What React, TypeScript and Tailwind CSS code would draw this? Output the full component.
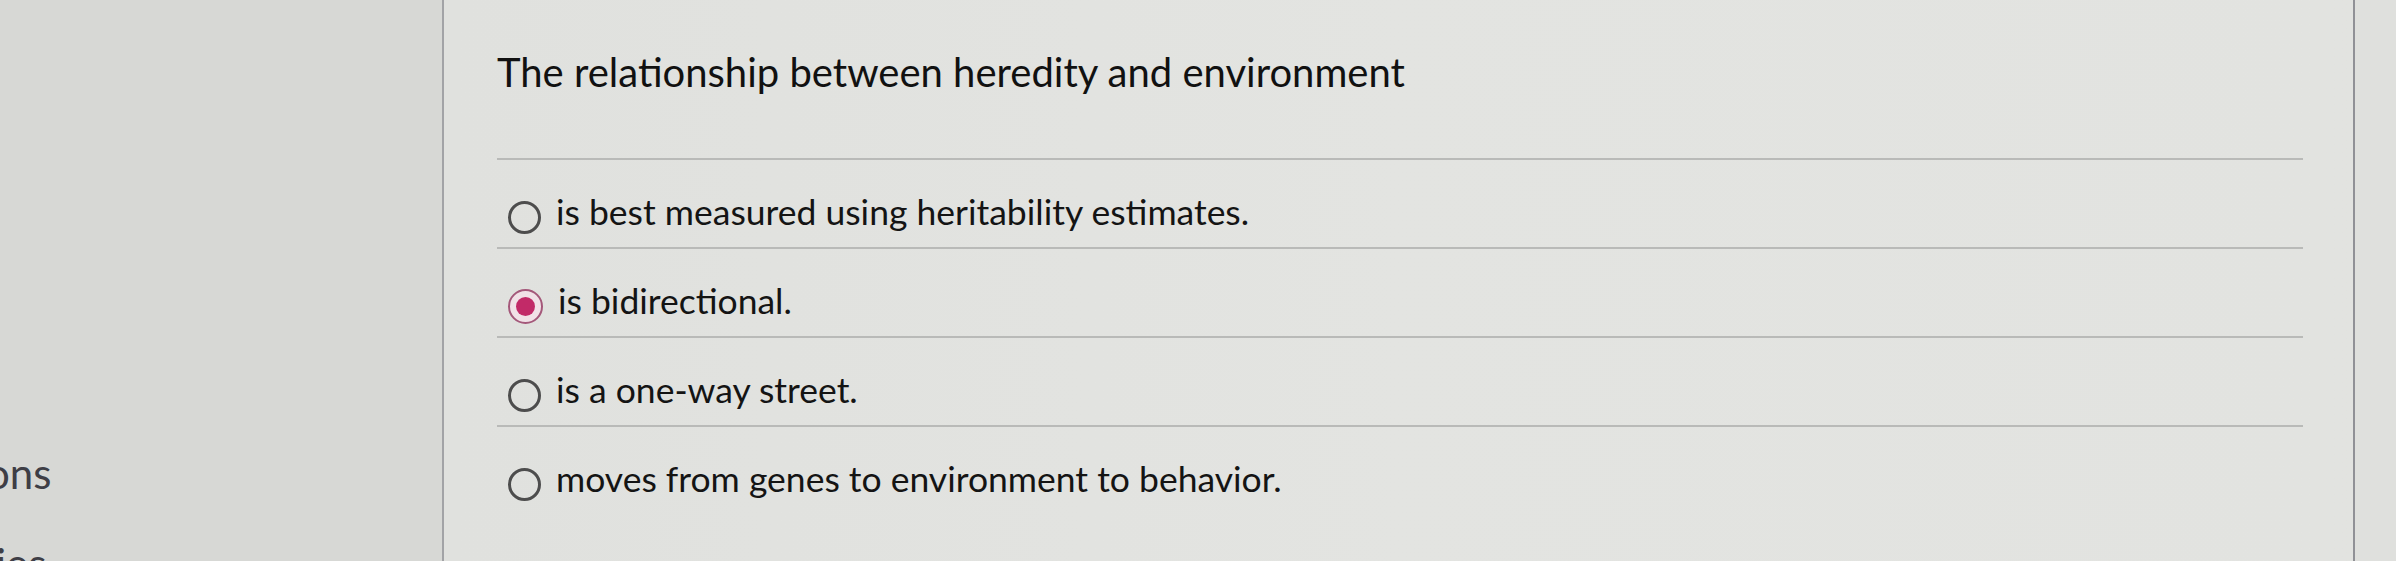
import React from "react";

interface Choice {
  id: string;
  label: string;
  selected?: boolean;
}

const choices: Choice[] = [
  { id: "a", label: "is best measured using heritability estimates." },
  { id: "b", label: "is bidirectional.", selected: true },
  { id: "c", label: "is a one-way street." },
  { id: "d", label: "moves from genes to environment to behavior." },
];

const Radio: React.FC<{ selected?: boolean }> = ({ selected }) => {
  if (selected) {
    return (
      <div className="mt-[9px] ml-[11px] w-[35px] h-[35px] shrink-0 rounded-full border-2 border-[#a4587a] bg-[#f1e1e7] flex items-center justify-center">
        <div className="w-[19px] h-[19px] rounded-full bg-[#c22a68]" />
      </div>
    );
  }
  return (
    <div className="mt-[10px] ml-[11px] w-[33px] h-[33px] shrink-0 rounded-full border-[3px] border-[#4d4d4d]" />
  );
};

export default function App() {
  return (
    <div
      className="w-[2396px] h-[561px] flex overflow-hidden bg-[#dedfdc]"
      style={{ fontFamily: "Lato, 'Noto Sans', sans-serif" }}
    >
      {/* course nav, mostly off screen */}
      <div className="w-[444px] shrink-0 bg-[#d7d8d5] border-r-2 border-[#a2a3a6] flex flex-col pt-[448px] overflow-hidden">
        <div className="-ml-[14px] text-[42px] leading-[1.2] text-[#3e3e46]">ons</div>
        <div className="mt-[40px] -ml-[4px] text-[42px] leading-[1.2] text-[#3e3e46]">ies</div>
      </div>

      {/* question panel */}
      <div className="w-[1911px] shrink-0 bg-gradient-to-r from-[#e0e1de] via-[#e3e4e1] to-[#e2e3e0] border-r-2 border-[#909196] pl-[53px] pr-[50px] pt-[48px]">
        <h1 className="text-[40px] leading-[1.2] font-normal text-[#111111]">
          The relationship between heredity and environment
        </h1>

        <div className="mt-[62px] border-t-2 border-[#b9bab8]">
          {choices.map((c, i) => (
            <div
              key={c.id}
              className={
                i < choices.length - 1
                  ? "h-[89px] flex items-start gap-[15px] pt-[31px] border-b-2 border-[#b9bab8]"
                  : "h-[89px] flex items-start gap-[15px] pt-[31px]"
              }
            >
              <Radio selected={c.selected} />
              <span className="text-[35.5px] leading-[1.2] text-[#141414]">{c.label}</span>
            </div>
          ))}
        </div>
      </div>

      <div className="flex-1 bg-[#dfe0dd]" />
    </div>
  );
}
